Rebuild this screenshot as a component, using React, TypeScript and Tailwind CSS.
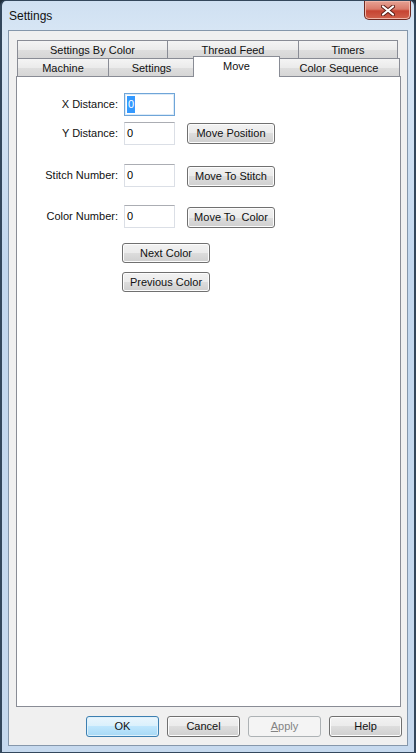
import React from "react";

const FONT = { fontFamily: '"Liberation Sans", Arial, sans-serif' };

const btn =
  "flex items-center justify-center rounded-[3px] border border-[#707070] bg-[linear-gradient(#f2f2f2_0%,#ebebeb_50%,#dddddd_50%,#cfcfcf_100%)] shadow-[inset_0_0_0_1px_#fcfcfc] text-[11px] text-[#111] leading-none";

const tab =
  "flex items-center justify-center border border-[#898c95] bg-[linear-gradient(#f4f4f4_0%,#ebebeb_50%,#dedede_52%,#d6d6d6_100%)] text-[11px] text-[#111] leading-none";

function Field({ label, value, focused }: { label: string; value: string; focused?: boolean }) {
  return (
    <>
      <span className="w-[101px] text-right text-[11px] text-[#111]">{label}</span>
      <div
        className={
          "ml-[6px] flex h-[23px] w-[51px] items-center bg-white pl-[2px] text-[11px] " +
          (focused
            ? "border border-[#6fa5d8] shadow-[inset_0_0_0_1px_#dcebf8]"
            : "border border-[#dbdfe6] border-t-[#abadb3]")
        }
      >
        {focused ? <span className="bg-[#3399ff] px-px text-white">{value}</span> : <span>{value}</span>}
      </div>
    </>
  );
}

export default function App() {
  return (
    <div className="h-[753px] w-[416px] bg-[#1f2d3b]" style={FONT}>
      <div className="flex h-full flex-col rounded-t-[6px] border-x-2 border-t border-b border-[#33475c] bg-[linear-gradient(180deg,#cfe0f2_0%,#d9e7f5_5%,#c2d7ee_35%,#c6d9ee_100%)]">
        {/* title bar */}
        <div className="flex h-[29px] shrink-0 items-start justify-between">
          <span className="pl-[7px] pt-[6px] text-[12px] text-[#111]">Settings</span>
          <div className="mr-[3px] flex h-[19px] w-[47px] items-center justify-center rounded-b-[5px] border border-t-0 border-[#6e2a22] bg-[linear-gradient(#e6a294_0%,#d97b6b_45%,#c64432_55%,#d0614c_100%)] shadow-[inset_0_0_0_1px_#f0b5a8]">
            <svg width="14" height="11" viewBox="0 0 14 11">
              <path d="M2 1.5 L12 9.5 M12 1.5 L2 9.5" stroke="#5a1d16" strokeWidth="4" strokeLinecap="round" />
              <path d="M2 1.5 L12 9.5 M12 1.5 L2 9.5" stroke="#ffffff" strokeWidth="2.2" strokeLinecap="round" />
            </svg>
          </div>
        </div>

        {/* client area */}
        <div className="mx-[6px] mb-[6px] flex flex-1 flex-col border border-[#8597ab] bg-[#f0f0f0]">
          {/* tabs row 1 */}
          <div className="ml-[8px] mt-[9px] flex">
            <div className={tab + " h-[19px] w-[151px] pt-[2px]"}>Settings By Color</div>
            <div className={tab + " -ml-px h-[19px] w-[132px] pt-[2px]"}>Thread Feed</div>
            <div className={tab + " -ml-px h-[19px] w-[100px] pt-[2px]"}>Timers</div>
          </div>
          {/* tabs row 2 */}
          <div className="-mt-px ml-[8px] flex items-start">
            <div className={tab + " h-[19px] w-[92px] pt-[1px]"}>Machine</div>
            <div className={tab + " -ml-px h-[19px] w-[87px] pt-[1px]"}>Settings</div>
            <div className="relative z-10 -mx-[2px] -mt-[2px] flex h-[21px] w-[87px] items-start justify-center border border-b-0 border-[#898c95] bg-white pt-[4px] text-[11px] leading-none text-[#111]">
              Move
            </div>
            <div className={tab + " h-[19px] w-[122px] pt-[1px]"}>Color Sequence</div>
          </div>

          {/* page */}
          <div className="-mt-px ml-[7px] flex w-[385px] flex-1 flex-col border border-[#898c95] bg-white pt-[16px]">
            <div className="flex h-[23px] items-center">
              <Field label="X Distance:" value="0" focused />
            </div>
            <div className="mt-[6px] flex h-[23px] items-center">
              <Field label="Y Distance:" value="0" />
              <div className={btn + " ml-[12px] h-[21px] w-[88px]"}>Move Position</div>
            </div>
            <div className="mt-[19px] flex h-[23px] items-center">
              <Field label="Stitch Number:" value="0" />
              <div className={btn + " ml-[12px] mt-[2px] h-[21px] w-[88px]"}>Move To Stitch</div>
            </div>
            <div className="mt-[18px] flex h-[23px] items-center">
              <Field label="Color Number:" value="0" />
              <div className={btn + " ml-[12px] mt-[2px] h-[21px] w-[88px] whitespace-pre"}>Move To  Color</div>
            </div>
            <div className={btn + " ml-[105px] mt-[15px] h-[20px] w-[88px]"}>Next Color</div>
            <div className={btn + " ml-[105px] mt-[9px] h-[20px] w-[88px]"}>Previous Color</div>
          </div>

          {/* dialog buttons */}
          <div className="mb-[8px] mt-[9px] flex justify-end gap-[8px] pr-[5px]">
            <div className="flex h-[21px] w-[73px] items-center justify-center rounded-[3px] border border-[#3c7fb1] bg-[linear-gradient(#eaf6fd_0%,#d9f0fc_50%,#bee6fd_50%,#a7d9f5_100%)] shadow-[inset_0_0_0_1px_#dff1fb] text-[11px] leading-none text-[#111]">
              OK
            </div>
            <div className={btn + " h-[21px] w-[73px]"}>Cancel</div>
            <div className="flex h-[21px] w-[73px] items-center justify-center rounded-[3px] border border-[#adb2b5] bg-[#f4f4f4] text-[11px] leading-none text-[#838383]">
              <span>
                <span className="underline">A</span>pply
              </span>
            </div>
            <div className={btn + " h-[21px] w-[73px]"}>Help</div>
          </div>
        </div>
      </div>
    </div>
  );
}
